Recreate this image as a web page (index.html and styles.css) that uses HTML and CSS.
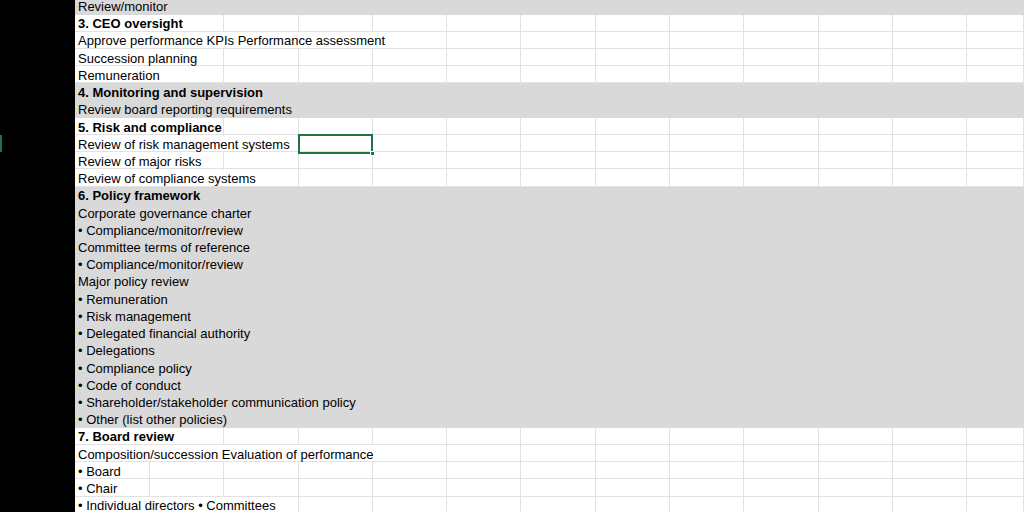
FILE: index.html
```html
<!DOCTYPE html>
<html>
<head>
<meta charset="utf-8">
<title>Board calendar</title>
<link rel="stylesheet" href="styles.css">
</head>
<body>
<div class="sheet">
  <div class="row fill"><div class="hd"></div><div class="t all">Review/monitor</div></div>
  <div class="row"><div class="hd"></div><div class="t b s2">3. CEO oversight</div><div class="c"></div><div class="c"></div><div class="c"></div><div class="c"></div><div class="c"></div><div class="c"></div><div class="c"></div><div class="c"></div><div class="c"></div><div class="c"></div><div class="c"></div></div>
  <div class="row"><div class="hd"></div><div class="t s5">Approve performance KPIs Performance assessment</div><div class="c"></div><div class="c"></div><div class="c"></div><div class="c"></div><div class="c"></div><div class="c"></div><div class="c"></div><div class="c"></div></div>
  <div class="row"><div class="hd"></div><div class="t s2">Succession planning</div><div class="c"></div><div class="c"></div><div class="c"></div><div class="c"></div><div class="c"></div><div class="c"></div><div class="c"></div><div class="c"></div><div class="c"></div><div class="c"></div><div class="c"></div></div>
  <div class="row"><div class="hd"></div><div class="t s2">Remuneration</div><div class="c"></div><div class="c"></div><div class="c"></div><div class="c"></div><div class="c"></div><div class="c"></div><div class="c"></div><div class="c"></div><div class="c"></div><div class="c"></div><div class="c"></div></div>
  <div class="row fill"><div class="hd"></div><div class="t b all">4. Monitoring and supervision</div></div>
  <div class="row fill"><div class="hd"></div><div class="t all">Review board reporting requirements</div></div>
  <div class="row"><div class="hd"></div><div class="t b s2">5. Risk and compliance</div><div class="c"></div><div class="c"></div><div class="c"></div><div class="c"></div><div class="c"></div><div class="c"></div><div class="c"></div><div class="c"></div><div class="c"></div><div class="c"></div><div class="c"></div></div>
  <div class="row"><div class="hd active"></div><div class="t s3">Review of risk management systems</div><div class="c sel"></div><div class="c"></div><div class="c"></div><div class="c"></div><div class="c"></div><div class="c"></div><div class="c"></div><div class="c"></div><div class="c"></div><div class="c"></div></div>
  <div class="row"><div class="hd"></div><div class="t s2">Review of major risks</div><div class="c"></div><div class="c"></div><div class="c"></div><div class="c"></div><div class="c"></div><div class="c"></div><div class="c"></div><div class="c"></div><div class="c"></div><div class="c"></div><div class="c"></div></div>
  <div class="row"><div class="hd"></div><div class="t s3">Review of compliance systems</div><div class="c"></div><div class="c"></div><div class="c"></div><div class="c"></div><div class="c"></div><div class="c"></div><div class="c"></div><div class="c"></div><div class="c"></div><div class="c"></div></div>
  <div class="row fill"><div class="hd"></div><div class="t b all">6. Policy framework</div></div>
  <div class="row fill"><div class="hd"></div><div class="t all">Corporate governance charter</div></div>
  <div class="row fill"><div class="hd"></div><div class="t all">• Compliance/monitor/review</div></div>
  <div class="row fill"><div class="hd"></div><div class="t all">Committee terms of reference</div></div>
  <div class="row fill"><div class="hd"></div><div class="t all">• Compliance/monitor/review</div></div>
  <div class="row fill"><div class="hd"></div><div class="t all">Major policy review</div></div>
  <div class="row fill"><div class="hd"></div><div class="t all">• Remuneration</div></div>
  <div class="row fill"><div class="hd"></div><div class="t all">• Risk management</div></div>
  <div class="row fill"><div class="hd"></div><div class="t all">• Delegated financial authority</div></div>
  <div class="row fill"><div class="hd"></div><div class="t all">• Delegations</div></div>
  <div class="row fill"><div class="hd"></div><div class="t all">• Compliance policy</div></div>
  <div class="row fill"><div class="hd"></div><div class="t all">• Code of conduct</div></div>
  <div class="row fill"><div class="hd"></div><div class="t all">• Shareholder/stakeholder communication policy</div></div>
  <div class="row fill"><div class="hd"></div><div class="t all">• Other (list other policies)</div></div>
  <div class="row"><div class="hd"></div><div class="t b s2">7. Board review</div><div class="c"></div><div class="c"></div><div class="c"></div><div class="c"></div><div class="c"></div><div class="c"></div><div class="c"></div><div class="c"></div><div class="c"></div><div class="c"></div><div class="c"></div></div>
  <div class="row"><div class="hd"></div><div class="t s5">Composition/succession Evaluation of performance</div><div class="c"></div><div class="c"></div><div class="c"></div><div class="c"></div><div class="c"></div><div class="c"></div><div class="c"></div><div class="c"></div></div>
  <div class="row"><div class="hd"></div><div class="t s1">• Board</div><div class="c"></div><div class="c"></div><div class="c"></div><div class="c"></div><div class="c"></div><div class="c"></div><div class="c"></div><div class="c"></div><div class="c"></div><div class="c"></div><div class="c"></div><div class="c"></div></div>
  <div class="row"><div class="hd"></div><div class="t s1">• Chair</div><div class="c"></div><div class="c"></div><div class="c"></div><div class="c"></div><div class="c"></div><div class="c"></div><div class="c"></div><div class="c"></div><div class="c"></div><div class="c"></div><div class="c"></div><div class="c"></div></div>
  <div class="row"><div class="hd"></div><div class="t s3">• Individual directors • Committees</div><div class="c"></div><div class="c"></div><div class="c"></div><div class="c"></div><div class="c"></div><div class="c"></div><div class="c"></div><div class="c"></div><div class="c"></div><div class="c"></div></div>
</div>
</body>
</html>
```

FILE: styles.css
```css
html, body {
  margin: 0;
  padding: 0;
  background: #ffffff;
  overflow: hidden;
}

body {
  font-family: "Liberation Sans", Arial, sans-serif;
  font-size: 13px;
  color: #000000;
}

.sheet {
  margin-top: -2.73px;
}

.row {
  display: grid;
  grid-template-columns: 75px 75px repeat(11, 74.3px) 1fr;
  height: 17.23px;
  box-sizing: border-box;
  border-bottom: 1px solid #e2e2e2;
}

.row.fill {
  background: #d9d9d9;
  border-bottom-color: #d9d9d9;
}

.hd {
  background: #000000;
  margin-bottom: -1px;
  box-sizing: border-box;
}

.hd.active {
  border-left: 2px solid #217346;
}

.t {
  white-space: nowrap;
  overflow: visible;
  padding: 1.7px 0 0 3px;
  line-height: 16px;
  box-sizing: border-box;
  border-right: 1px solid #e2e2e2;
}

.row.fill .t {
  border-right: none;
}

.b {
  font-weight: bold;
}

.all { grid-column: 2 / -1; }
.s1 { grid-column: span 1; }
.s2 { grid-column: span 2; }
.s3 { grid-column: span 3; }
.s4 { grid-column: span 4; }
.s5 { grid-column: span 5; }

.c {
  border-right: 1px solid #e2e2e2;
  box-sizing: border-box;
}

.c.sel {
  position: relative;
}

.c.sel::before {
  content: "";
  position: absolute;
  left: -1px;
  top: -1px;
  right: -1px;
  bottom: -1px;
  border: 2px solid #217346;
}

.c.sel::after {
  content: "";
  position: absolute;
  right: -3px;
  bottom: -3px;
  width: 5px;
  height: 5px;
  background: #217346;
  border: 1px solid #ffffff;
  box-sizing: border-box;
}
```
